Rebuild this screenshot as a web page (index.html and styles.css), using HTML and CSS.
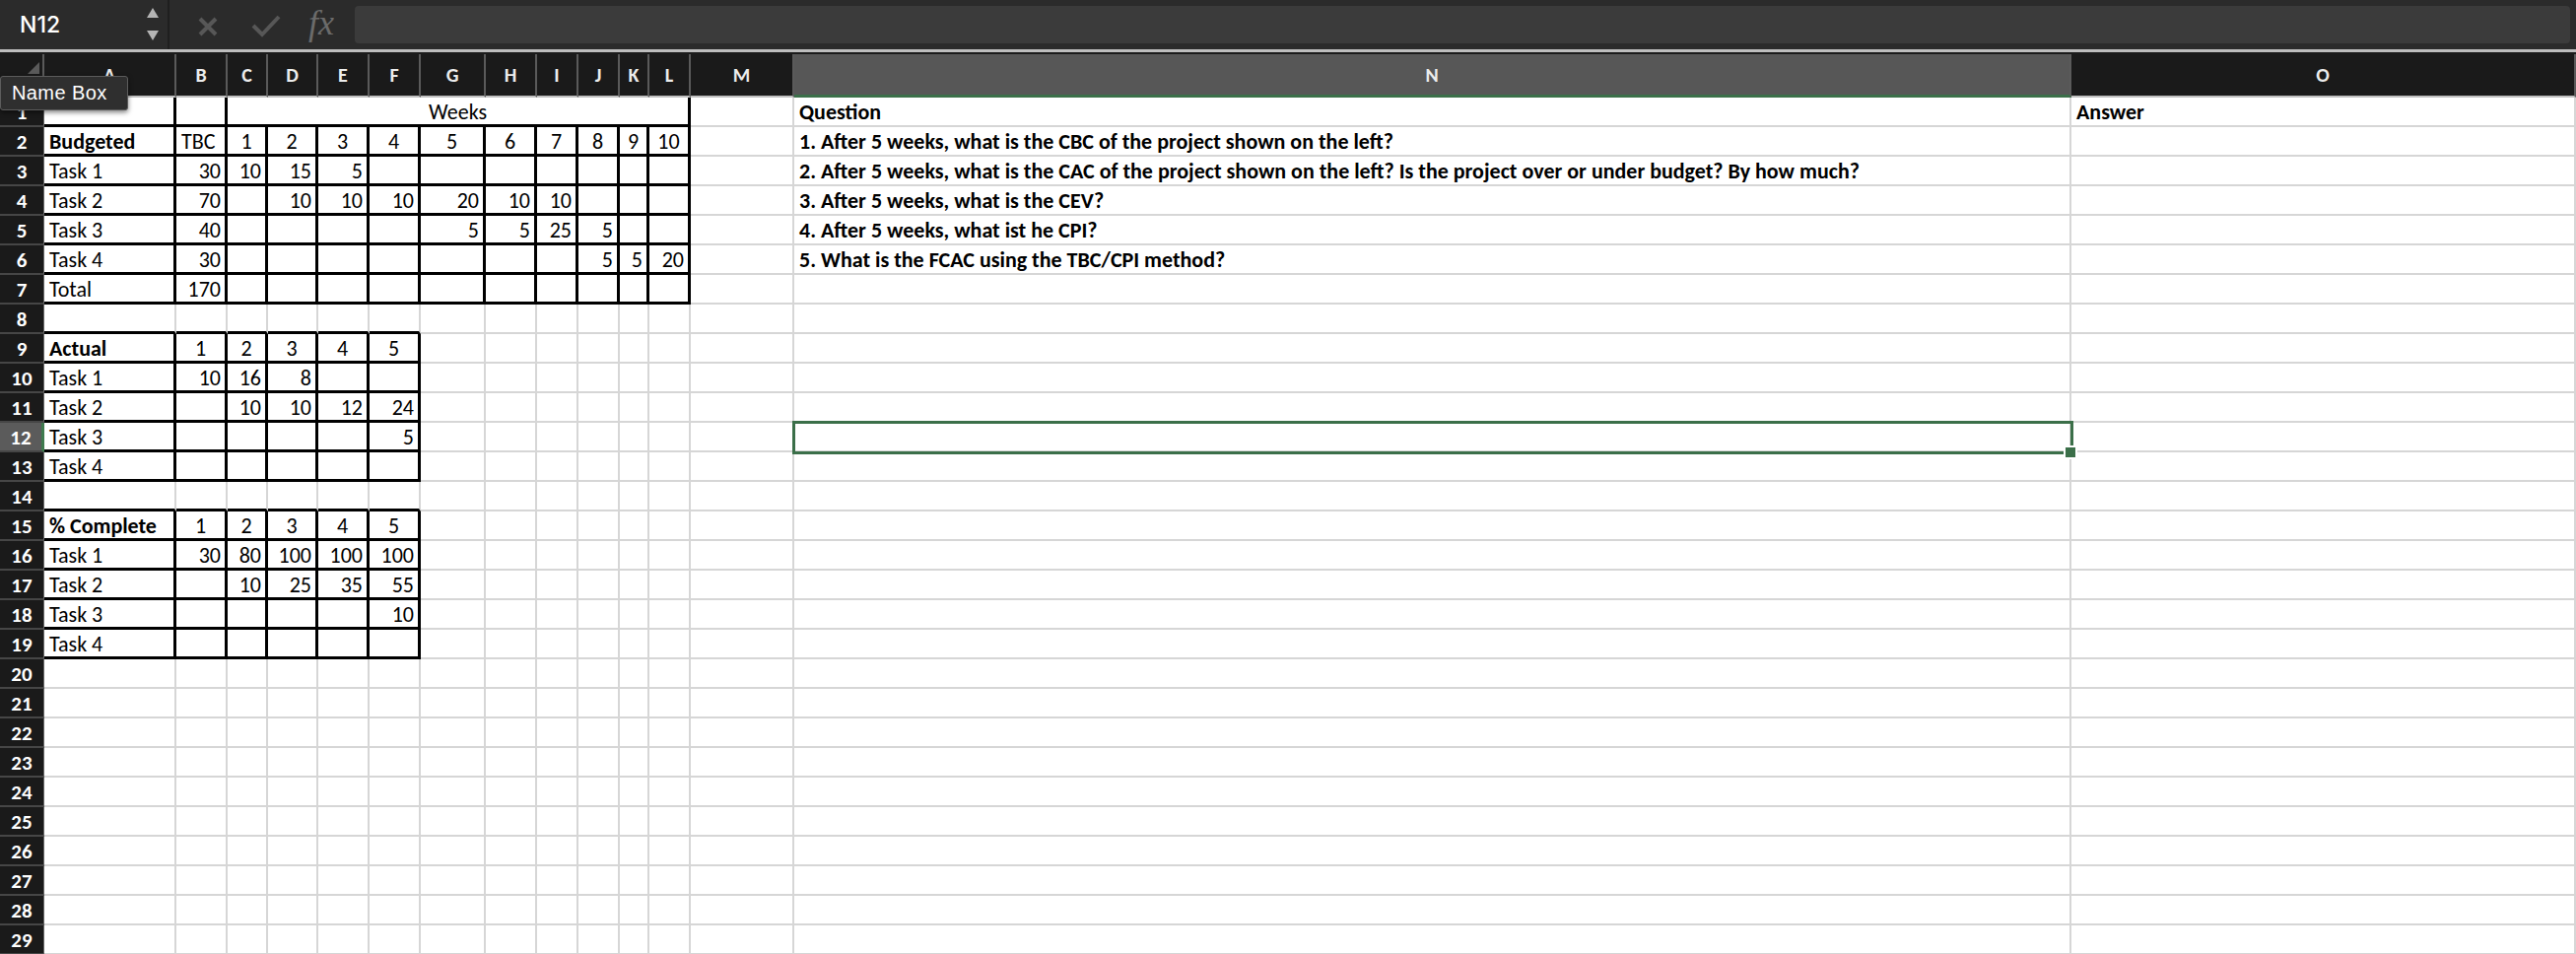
FILE: index.html
```
<!DOCTYPE html>
<html lang="en">
<head>
<meta charset="utf-8">
<title>Spreadsheet</title>
<link rel="stylesheet" href="styles.css">
</head>
<body>
<div class="toolbar">
  <div class="namebox">
    <span class="nb-text">N12</span>
    <svg class="spin" width="14" height="36" viewBox="0 0 14 36"><path d="M7 1 L13 11 L1 11 Z" fill="#b4b4b4"/><path d="M1 24 L13 24 L7 34 Z" fill="#b4b4b4"/></svg>
  </div>
  <div class="actions">
    <svg class="ic-x" width="22" height="22" viewBox="0 0 22 22"><path d="M3 3 L19 19 M19 3 L3 19" stroke="#575757" stroke-width="4"/></svg>
    <svg class="ic-ok" width="30" height="24" viewBox="0 0 30 24"><path d="M2 12 L11 21 L28 3" stroke="#575757" stroke-width="4" fill="none"/></svg>
    <span class="fx">fx</span>
  </div>
  <div class="formula"></div>
</div>
<div class="rule"></div>
<div class="sheet-wrap">
<div class="sheet">
  <div class="corner"></div>
  <div class="ch">A</div><div class="ch">B</div><div class="ch">C</div><div class="ch">D</div><div class="ch">E</div><div class="ch">F</div><div class="ch">G</div><div class="ch">H</div><div class="ch">I</div><div class="ch">J</div><div class="ch">K</div><div class="ch">L</div><div class="ch">M</div><div class="ch on">N</div><div class="ch">O</div>

  <div class="rh">1</div>
  <div class="c k"></div><div class="c k"></div><div class="c k m span10">Weeks</div>
  <div class="c"></div><div class="c bd">Question</div><div class="c bd">Answer</div>

  <div class="rh">2</div>
  <div class="c k bd">Budgeted</div><div class="c k">TBC</div>
  <div class="c k m">1</div><div class="c k m">2</div><div class="c k m">3</div><div class="c k m">4</div><div class="c k m">5</div><div class="c k m">6</div><div class="c k m">7</div><div class="c k m">8</div><div class="c k m">9</div><div class="c k m">10</div>
  <div class="c"></div><div class="c bd">1. After 5 weeks, what is the CBC of the project shown on the left?</div><div class="c"></div>

  <div class="rh">3</div>
  <div class="c k">Task 1</div><div class="c k r">30</div>
  <div class="c k r">10</div><div class="c k r">15</div><div class="c k r">5</div><div class="c k"></div><div class="c k"></div><div class="c k"></div><div class="c k"></div><div class="c k"></div><div class="c k"></div><div class="c k"></div>
  <div class="c"></div><div class="c bd">2. After 5 weeks, what is the CAC of the project shown on the left? Is the project over or under budget? By how much?</div><div class="c"></div>

  <div class="rh">4</div>
  <div class="c k">Task 2</div><div class="c k r">70</div>
  <div class="c k"></div><div class="c k r">10</div><div class="c k r">10</div><div class="c k r">10</div><div class="c k r">20</div><div class="c k r">10</div><div class="c k r">10</div><div class="c k"></div><div class="c k"></div><div class="c k"></div>
  <div class="c"></div><div class="c bd">3. After 5 weeks, what is the CEV?</div><div class="c"></div>

  <div class="rh">5</div>
  <div class="c k">Task 3</div><div class="c k r">40</div>
  <div class="c k"></div><div class="c k"></div><div class="c k"></div><div class="c k"></div><div class="c k r">5</div><div class="c k r">5</div><div class="c k r">25</div><div class="c k r">5</div><div class="c k"></div><div class="c k"></div>
  <div class="c"></div><div class="c bd">4. After 5 weeks, what ist he CPI?</div><div class="c"></div>

  <div class="rh">6</div>
  <div class="c k">Task 4</div><div class="c k r">30</div>
  <div class="c k"></div><div class="c k"></div><div class="c k"></div><div class="c k"></div><div class="c k"></div><div class="c k"></div><div class="c k"></div><div class="c k r">5</div><div class="c k r">5</div><div class="c k r">20</div>
  <div class="c"></div><div class="c bd">5. What is the FCAC using the TBC/CPI method?</div><div class="c"></div>

  <div class="rh">7</div>
  <div class="c k">Total</div><div class="c k r">170</div>
  <div class="c k"></div><div class="c k"></div><div class="c k"></div><div class="c k"></div><div class="c k"></div><div class="c k"></div><div class="c k"></div><div class="c k"></div><div class="c k"></div><div class="c k"></div>
  <div class="c"></div><div class="c"></div><div class="c"></div>

  <div class="rh">8</div>
  <div class="c kb"></div><div class="c kb"></div><div class="c kb"></div><div class="c kb"></div><div class="c kb"></div><div class="c kb"></div>
  <div class="c"></div><div class="c"></div><div class="c"></div><div class="c"></div><div class="c"></div><div class="c"></div><div class="c"></div><div class="c"></div><div class="c"></div>

  <div class="rh">9</div>
  <div class="c k bd">Actual</div><div class="c k m">1</div><div class="c k m">2</div><div class="c k m">3</div><div class="c k m">4</div><div class="c k m">5</div>
  <div class="c"></div><div class="c"></div><div class="c"></div><div class="c"></div><div class="c"></div><div class="c"></div><div class="c"></div><div class="c"></div><div class="c"></div>

  <div class="rh">10</div>
  <div class="c k">Task 1</div><div class="c k r">10</div><div class="c k r">16</div><div class="c k r">8</div><div class="c k"></div><div class="c k"></div>
  <div class="c"></div><div class="c"></div><div class="c"></div><div class="c"></div><div class="c"></div><div class="c"></div><div class="c"></div><div class="c"></div><div class="c"></div>

  <div class="rh">11</div>
  <div class="c k">Task 2</div><div class="c k"></div><div class="c k r">10</div><div class="c k r">10</div><div class="c k r">12</div><div class="c k r">24</div>
  <div class="c"></div><div class="c"></div><div class="c"></div><div class="c"></div><div class="c"></div><div class="c"></div><div class="c"></div><div class="c"></div><div class="c"></div>

  <div class="rh on">12</div>
  <div class="c k">Task 3</div><div class="c k"></div><div class="c k"></div><div class="c k"></div><div class="c k"></div><div class="c k r">5</div>
  <div class="c"></div><div class="c"></div><div class="c"></div><div class="c"></div><div class="c"></div><div class="c"></div><div class="c"></div><div class="c"></div><div class="c"></div>

  <div class="rh">13</div>
  <div class="c k">Task 4</div><div class="c k"></div><div class="c k"></div><div class="c k"></div><div class="c k"></div><div class="c k"></div>
  <div class="c"></div><div class="c"></div><div class="c"></div><div class="c"></div><div class="c"></div><div class="c"></div><div class="c"></div><div class="c"></div><div class="c"></div>

  <div class="rh">14</div>
  <div class="c kb"></div><div class="c kb"></div><div class="c kb"></div><div class="c kb"></div><div class="c kb"></div><div class="c kb"></div>
  <div class="c"></div><div class="c"></div><div class="c"></div><div class="c"></div><div class="c"></div><div class="c"></div><div class="c"></div><div class="c"></div><div class="c"></div>

  <div class="rh">15</div>
  <div class="c k bd">% Complete</div><div class="c k m">1</div><div class="c k m">2</div><div class="c k m">3</div><div class="c k m">4</div><div class="c k m">5</div>
  <div class="c"></div><div class="c"></div><div class="c"></div><div class="c"></div><div class="c"></div><div class="c"></div><div class="c"></div><div class="c"></div><div class="c"></div>

  <div class="rh">16</div>
  <div class="c k">Task 1</div><div class="c k r">30</div><div class="c k r">80</div><div class="c k r">100</div><div class="c k r">100</div><div class="c k r">100</div>
  <div class="c"></div><div class="c"></div><div class="c"></div><div class="c"></div><div class="c"></div><div class="c"></div><div class="c"></div><div class="c"></div><div class="c"></div>

  <div class="rh">17</div>
  <div class="c k">Task 2</div><div class="c k"></div><div class="c k r">10</div><div class="c k r">25</div><div class="c k r">35</div><div class="c k r">55</div>
  <div class="c"></div><div class="c"></div><div class="c"></div><div class="c"></div><div class="c"></div><div class="c"></div><div class="c"></div><div class="c"></div><div class="c"></div>

  <div class="rh">18</div>
  <div class="c k">Task 3</div><div class="c k"></div><div class="c k"></div><div class="c k"></div><div class="c k"></div><div class="c k r">10</div>
  <div class="c"></div><div class="c"></div><div class="c"></div><div class="c"></div><div class="c"></div><div class="c"></div><div class="c"></div><div class="c"></div><div class="c"></div>

  <div class="rh">19</div>
  <div class="c k">Task 4</div><div class="c k"></div><div class="c k"></div><div class="c k"></div><div class="c k"></div><div class="c k"></div>
  <div class="c"></div><div class="c"></div><div class="c"></div><div class="c"></div><div class="c"></div><div class="c"></div><div class="c"></div><div class="c"></div><div class="c"></div>

  <div class="rh">20</div>
  <div class="c"></div><div class="c"></div><div class="c"></div><div class="c"></div><div class="c"></div><div class="c"></div><div class="c"></div><div class="c"></div><div class="c"></div><div class="c"></div><div class="c"></div><div class="c"></div><div class="c"></div><div class="c"></div><div class="c"></div>
  <div class="rh">21</div>
  <div class="c"></div><div class="c"></div><div class="c"></div><div class="c"></div><div class="c"></div><div class="c"></div><div class="c"></div><div class="c"></div><div class="c"></div><div class="c"></div><div class="c"></div><div class="c"></div><div class="c"></div><div class="c"></div><div class="c"></div>
  <div class="rh">22</div>
  <div class="c"></div><div class="c"></div><div class="c"></div><div class="c"></div><div class="c"></div><div class="c"></div><div class="c"></div><div class="c"></div><div class="c"></div><div class="c"></div><div class="c"></div><div class="c"></div><div class="c"></div><div class="c"></div><div class="c"></div>
  <div class="rh">23</div>
  <div class="c"></div><div class="c"></div><div class="c"></div><div class="c"></div><div class="c"></div><div class="c"></div><div class="c"></div><div class="c"></div><div class="c"></div><div class="c"></div><div class="c"></div><div class="c"></div><div class="c"></div><div class="c"></div><div class="c"></div>
  <div class="rh">24</div>
  <div class="c"></div><div class="c"></div><div class="c"></div><div class="c"></div><div class="c"></div><div class="c"></div><div class="c"></div><div class="c"></div><div class="c"></div><div class="c"></div><div class="c"></div><div class="c"></div><div class="c"></div><div class="c"></div><div class="c"></div>
  <div class="rh">25</div>
  <div class="c"></div><div class="c"></div><div class="c"></div><div class="c"></div><div class="c"></div><div class="c"></div><div class="c"></div><div class="c"></div><div class="c"></div><div class="c"></div><div class="c"></div><div class="c"></div><div class="c"></div><div class="c"></div><div class="c"></div>
  <div class="rh">26</div>
  <div class="c"></div><div class="c"></div><div class="c"></div><div class="c"></div><div class="c"></div><div class="c"></div><div class="c"></div><div class="c"></div><div class="c"></div><div class="c"></div><div class="c"></div><div class="c"></div><div class="c"></div><div class="c"></div><div class="c"></div>
  <div class="rh">27</div>
  <div class="c"></div><div class="c"></div><div class="c"></div><div class="c"></div><div class="c"></div><div class="c"></div><div class="c"></div><div class="c"></div><div class="c"></div><div class="c"></div><div class="c"></div><div class="c"></div><div class="c"></div><div class="c"></div><div class="c"></div>
  <div class="rh">28</div>
  <div class="c"></div><div class="c"></div><div class="c"></div><div class="c"></div><div class="c"></div><div class="c"></div><div class="c"></div><div class="c"></div><div class="c"></div><div class="c"></div><div class="c"></div><div class="c"></div><div class="c"></div><div class="c"></div><div class="c"></div>
  <div class="rh">29</div>
  <div class="c"></div><div class="c"></div><div class="c"></div><div class="c"></div><div class="c"></div><div class="c"></div><div class="c"></div><div class="c"></div><div class="c"></div><div class="c"></div><div class="c"></div><div class="c"></div><div class="c"></div><div class="c"></div><div class="c"></div>
</div>
<div class="selection"></div>
<div class="handle"></div>
</div>
<div class="tooltip">Name Box</div>
</body>
</html>
```
FILE: styles.css
```
* { box-sizing: border-box; margin: 0; padding: 0; }
html, body { width: 2614px; height: 968px; overflow: hidden; }
body {
  position: relative;
  background: #1b1b1b;
  font-family: Carlito, Lato, "Noto Sans", sans-serif;
}

/* formula bar */
.toolbar { height: 50px; background: #2b2b2b; display: flex; align-items: stretch; }
.namebox {
  width: 172px;
  display: flex; align-items: center; justify-content: space-between;
  padding: 0 8px 0 20px;
  border-right: 2px solid #1f1f1f;
  font-family: Inter, "Liberation Sans", Arial, sans-serif;
  font-weight: 500;
  font-size: 23px; color: #fff;
}
.spin { display: block; }
.actions { width: 188px; display: flex; align-items: center; padding-left: 28px; }
.ic-x { display: block; margin-right: 33px; margin-top: 4px; }
.ic-ok { display: block; margin-right: 28px; margin-top: 2px; }
.fx {
  font-family: "Liberation Serif", "Times New Roman", serif;
  font-style: italic; font-size: 36px; color: #6b6b6b; line-height: 1;
  margin-top: -4px;
}
.formula { flex: 1; margin: 6px 6px 6px 0; background: #3b3b3b; border-radius: 4px; }
.rule { height: 5px; background: #1b1b1b; border-top: 3px solid #bdbdbd; }

/* sheet */
.sheet-wrap { position: relative; }
.sheet {
  display: grid;
  grid-template-columns: 45px 134px 52px 41px 51px 52px 52px 66px 52px 42px 42px 30px 42px 105px 1296px 512px;
  grid-template-rows: 44px;
  grid-auto-rows: 30px;
}
.corner {
  position: relative;
  background: #1a1a1a;
  border-right: 2px solid #5a5a5a;
  border-bottom: 2px solid #c0c0c0;
}
.corner::after {
  content: ""; position: absolute; right: 3px; bottom: 22px;
  width: 0; height: 0;
  border-left: 12px solid transparent;
  border-bottom: 12px solid #5a5a5a;
}
.ch {
  background: #1a1a1a; color: #ececec;
  font-weight: 700; font-size: 20px;
  display: flex; align-items: center; justify-content: center;
  border-right: 2px solid #5a5a5a;
  border-bottom: 2px solid #c0c0c0;
}
.ch.on { background: #575757; border-bottom: 3px solid #3b6f49; }
.rh {
  background: #1a1a1a; color: #fff;
  font-weight: 700; font-size: 21px;
  text-align: center; line-height: 31px;
  border-bottom: 2px solid #464646;
  border-right: 1px solid #6a6a6a;
}
.rh.on { background: #5b5b5b; border-right: 3px solid #3e7a4e; }

.c {
  background: #fff; color: #000;
  font-size: 22px; line-height: 30px;
  padding: 0 5px;
  white-space: nowrap;
  border-right: 2px solid #d6d6d6;
  border-bottom: 2px solid #d6d6d6;
}
.k { border-right: 3px solid #000; border-bottom: 3px solid #000; }
.kb { border-bottom: 3px solid #000; }
.r { text-align: right; padding-right: 4px; }
.m { text-align: center; padding-left: 0; padding-right: 0; }
.bd { font-weight: 700; }
.span10 { grid-column: span 10; }

/* selection overlay */
.selection {
  position: absolute; left: 804px; top: 372px;
  width: 1300px; height: 34px;
  border: 3px solid #3b6f49;
}
.handle {
  position: absolute; left: 2096px; top: 399px;
  width: 10px; height: 10px;
  background: #3b6f49;
  box-shadow: 0 0 0 2px #fff;
}

/* tooltip */
.tooltip {
  position: absolute; left: 0; top: 77px;
  width: 130px; height: 35px;
  background: #2f2f2f; color: #fff;
  border: 1px solid #5c5c5c; border-radius: 3px;
  box-shadow: 0 2px 5px rgba(0,0,0,0.5);
  font-family: "Liberation Sans", Arial, sans-serif;
  font-size: 20px; letter-spacing: 0.4px;
  line-height: 33px; padding-left: 11px;
}
```
